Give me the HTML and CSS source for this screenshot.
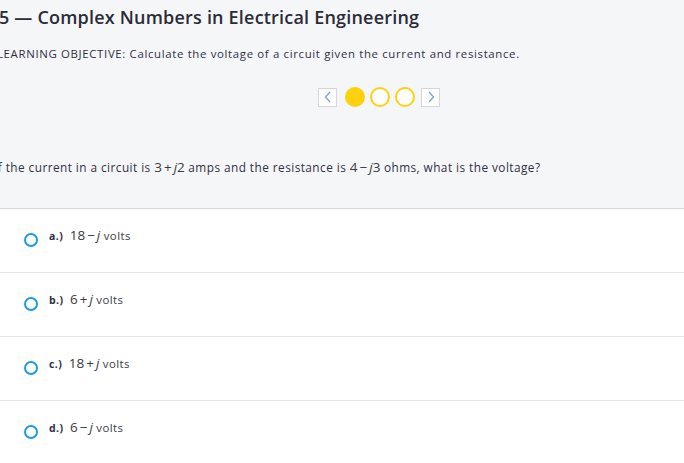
FILE: index.html
```html
<!DOCTYPE html>
<html>
<head>
<meta charset="utf-8">
<link rel="stylesheet" href="styles.css">
</head>
<body>
<div class="top">
  <h1 class="title">5 — Complex Numbers in Electrical Engineering</h1>
  <p class="objective"><span class="lo">LEARNING OBJECTIVE:</span> Calculate the voltage of a circuit given the current and resistance.</p>
  <div class="nav">
    <span class="navbtn"><svg width="10" height="12" viewBox="0 0 10 12"><path d="M7 1 L2.5 6 L7 11" fill="none" stroke="#6e9ee6" stroke-width="1.2"/></svg></span>
    <span class="dot filled"></span>
    <span class="dot"></span>
    <span class="dot"></span>
    <span class="navbtn"><svg width="10" height="12" viewBox="0 0 10 12"><path d="M3 1 L7.5 6 L3 11" fill="none" stroke="#6e9ee6" stroke-width="1.2"/></svg></span>
  </div>
  <p class="question">If the current in a circuit is <span class="m">3<span class="op">+</span><i>j</i>2</span> amps and the resistance is <span class="m">4<span class="op">−</span><i>j</i>3</span> ohms, what is the voltage?</p>
</div>
<div class="options">
  <div class="opt"><span class="radio"></span><span class="lbl"><b>a.)</b> <span class="m">18<span class="op">−</span><i>j</i></span> volts</span></div>
  <div class="opt"><span class="radio"></span><span class="lbl"><b>b.)</b> <span class="m">6<span class="op">+</span><i>j</i></span> volts</span></div>
  <div class="opt"><span class="radio"></span><span class="lbl"><b>c.)</b> <span class="m">18<span class="op">+</span><i>j</i></span> volts</span></div>
  <div class="opt"><span class="radio"></span><span class="lbl"><b>d.)</b> <span class="m">6<span class="op">−</span><i>j</i></span> volts</span></div>
</div>
</body>
</html>
```
FILE: styles.css
```css
html, body {
  margin: 0;
  padding: 0;
  background: #ffffff;
  font-family: "Open Sans", Lato, sans-serif;
  color: #333338;
  overflow: hidden;
}
.top {
  background: #f5f6f8;
  height: 208px;
  border-bottom: 1px solid #d8d8da;
  overflow: hidden;
}
.title {
  margin: 0;
  padding-top: 5px;
  margin-left: -1px;
  font-size: 18px;
  font-weight: 600;
  line-height: 24px;
  color: #2b2b38;
  letter-spacing: 0.2px;
}
.objective {
  margin: 17px 0 0 -3px;
  font-size: 11.4px;
  line-height: 16px;
  color: #2f3045;
  letter-spacing: 0.66px;
}
.nav {
  display: flex;
  align-items: center;
  margin-top: 24px;
  margin-left: 318px;
  height: 22px;
}
.navbtn {
  width: 17px;
  height: 17px;
  border: 1px solid #d4d6db;
  background: #fff;
  display: flex;
  align-items: center;
  justify-content: center;
  margin-right: 8px;
}
.navbtn:last-child { margin-left: 1px; margin-right: 0; }
.dot {
  width: 16px;
  height: 16px;
  border: 2px solid #fdd10e;
  border-radius: 50%;
  background: #fff;
  margin-right: 5px;
}
.dot.filled { background: #fdd10e; }
.question {
  margin: 51px 0 0 -6px;
  font-size: 11.8px;
  line-height: 16px;
  color: #2f3045;
  letter-spacing: 0.45px;
}
.m { font-size: 13.5px; font-weight: 400; color: #3a3a40; letter-spacing: 0; }
.m i { font-style: italic; }
.op { margin: 0 2px; }
.options { background: #fff; }
.opt {
  height: 63px;
  border-bottom: 1px solid #e3e3e5;
  position: relative;
}
.radio {
  position: absolute;
  left: 24px;
  top: 24px;
  width: 10px;
  height: 10px;
  border: 2px solid #1f9ae6;
  border-radius: 50%;
}
.lbl {
  position: absolute;
  left: 49px;
  top: 17px;
  font-size: 11.4px;
  color: #3a3a45;
  letter-spacing: 0.45px;
}
.lbl b { font-size: 10.5px; font-weight: 700; color: #2f3045; margin-right: 3px; }
```
